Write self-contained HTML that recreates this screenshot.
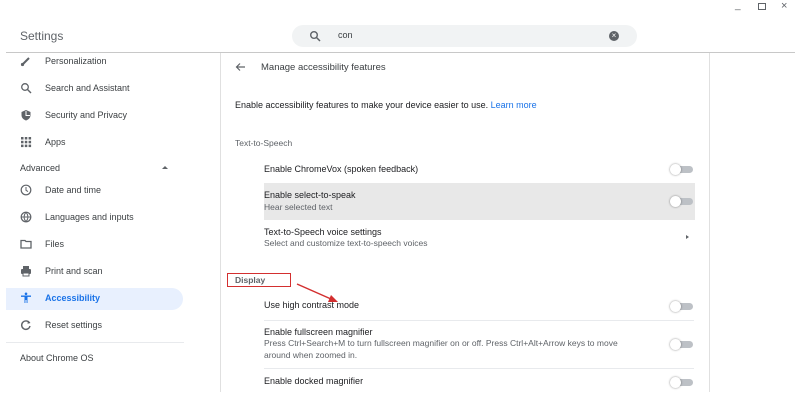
<!DOCTYPE html>
<html><head><style>
body{margin:0;width:800px;height:400px;background:#fff;font-family:"Liberation Sans",sans-serif;position:relative;overflow:hidden;color:#202124}
.a{position:absolute;white-space:nowrap}
.s{font-size:9px;color:#3c4043}
.ic{position:absolute;left:20px;width:12px;height:12px}
.t{font-size:9px;color:#202124}
.g{font-size:8.5px;color:#5f6368}
.tog{position:absolute;left:671px;width:22px;height:7px;border-radius:4px;background:#bdc1c6}
.tog:after{content:"";position:absolute;left:-1px;top:-2px;width:11px;height:11px;border-radius:50%;background:#fff;box-shadow:0 0 2px rgba(0,0,0,.45)}
.sep{position:absolute;left:264px;width:430px;height:1px;background:#e8eaed}
</style></head><body>
<div class="a" style="left:20px;top:29px;font-size:12px;color:#5f6368">Settings</div>
<div class="a" style="left:292px;top:25px;width:345px;height:22px;border-radius:11px;background:#f1f3f4"></div>
<svg class="a" style="left:309px;top:30px" width="12" height="12" viewBox="0 0 12 12"><circle cx="5" cy="5" r="3.3" fill="none" stroke="#5f6368" stroke-width="1.4"/><path d="M7.5 7.5L11 11" stroke="#5f6368" stroke-width="1.5"/></svg>
<div class="a" style="left:338px;top:30px;font-size:9px;color:#3c4043">con</div>
<div class="a" style="left:609px;top:31px;width:10px;height:10px;border-radius:50%;background:#5f6368;color:#fff;font-size:8px;line-height:10px;text-align:center">×</div>
<div class="a" style="left:735px;top:0;font-size:10px;color:#5f6368">_</div>
<div class="a" style="left:758px;top:3px;width:6px;height:5px;border:1.3px solid #5f6368"></div>
<div class="a" style="left:781px;top:0;font-size:11px;color:#5f6368">×</div>
<div class="a" style="left:6px;top:52px;width:789px;height:1px;background:#c8c8c8"></div>
<div class="a" style="left:220px;top:53px;width:1px;height:347px;background:#e0e0e0"></div>
<div class="a" style="left:709px;top:53px;width:1px;height:347px;background:#e0e0e0"></div>

<!-- sidebar -->
<svg class="ic" style="top:55px" viewBox="0 0 12 12"><path d="M2 10L9 3" stroke="#5f6368" stroke-width="2"/><circle cx="2.5" cy="9.5" r="1.6" fill="#5f6368"/></svg>
<div class="a s" style="left:45px;top:56px">Personalization</div>
<svg class="ic" style="top:82px" viewBox="0 0 12 12"><circle cx="5" cy="5" r="3.3" fill="none" stroke="#5f6368" stroke-width="1.3"/><path d="M7.5 7.5L11 11" stroke="#5f6368" stroke-width="1.4"/></svg>
<div class="a s" style="left:45px;top:83px">Search and Assistant</div>
<svg class="ic" style="top:109px" viewBox="0 0 12 12"><path d="M6 1L10.5 3v3c0 3-2 4.5-4.5 5.5C3.5 10.5 1.5 9 1.5 6V3z" fill="#5f6368"/><path d="M6 2v4.5h4" stroke="#fff" stroke-width="1" fill="none"/></svg>
<div class="a s" style="left:45px;top:110px">Security and Privacy</div>
<svg class="ic" style="top:136px" viewBox="0 0 12 12" fill="#5f6368"><rect x="1" y="1" width="2.5" height="2.5"/><rect x="4.8" y="1" width="2.5" height="2.5"/><rect x="8.6" y="1" width="2.5" height="2.5"/><rect x="1" y="4.8" width="2.5" height="2.5"/><rect x="4.8" y="4.8" width="2.5" height="2.5"/><rect x="8.6" y="4.8" width="2.5" height="2.5"/><rect x="1" y="8.6" width="2.5" height="2.5"/><rect x="4.8" y="8.6" width="2.5" height="2.5"/><rect x="8.6" y="8.6" width="2.5" height="2.5"/></svg>
<div class="a s" style="left:45px;top:137px">Apps</div>
<div class="a s" style="left:20px;top:163px">Advanced</div>
<div class="a" style="left:162px;top:166px;width:0;height:0;border-left:3px solid transparent;border-right:3px solid transparent;border-bottom:3px solid #5f6368"></div>
<svg class="ic" style="top:184px" viewBox="0 0 12 12"><circle cx="6" cy="6" r="4.8" fill="none" stroke="#5f6368" stroke-width="1.2"/><path d="M6 3v3.3l2 1.3" stroke="#5f6368" stroke-width="1" fill="none"/></svg>
<div class="a s" style="left:45px;top:185px">Date and time</div>
<svg class="ic" style="top:211px" viewBox="0 0 12 12"><circle cx="6" cy="6" r="4.8" fill="none" stroke="#5f6368" stroke-width="1.2"/><path d="M1.2 6h9.6M6 1.2c-2.5 3-2.5 6.6 0 9.6M6 1.2c2.5 3 2.5 6.6 0 9.6" stroke="#5f6368" stroke-width="1" fill="none"/></svg>
<div class="a s" style="left:45px;top:212px">Languages and inputs</div>
<svg class="ic" style="top:238px" viewBox="0 0 12 12"><path d="M1 2.5h4l1 1h5v6.5H1z" fill="none" stroke="#5f6368" stroke-width="1.3"/></svg>
<div class="a s" style="left:45px;top:239px">Files</div>
<svg class="ic" style="top:265px" viewBox="0 0 12 12" fill="#5f6368"><rect x="3" y="1" width="6" height="3"/><rect x="1" y="4" width="10" height="5" rx="1"/><rect x="3" y="8" width="6" height="3" fill="#fff" stroke="#5f6368"/></svg>
<div class="a s" style="left:45px;top:266px">Print and scan</div>
<div class="a" style="left:6px;top:288px;width:177px;height:22px;border-radius:0 11px 11px 0;background:#e8f0fe"></div>
<svg class="ic" style="top:292px" viewBox="0 0 12 12" fill="#1a73e8"><circle cx="6" cy="1.8" r="1.3"/><path d="M1 3.5h10v1.4H7.5V11H6.6V8H5.4v3H4.5V4.9H1z"/></svg>
<div class="a s" style="left:45px;top:293px;color:#1a73e8;font-weight:bold">Accessibility</div>
<svg class="ic" style="top:319px" viewBox="0 0 12 12"><path d="M9.5 4A4.2 4.2 0 1 0 10 7" fill="none" stroke="#5f6368" stroke-width="1.4"/><path d="M8 1.5l2.5 2.5-3 .8z" fill="#5f6368"/></svg>
<div class="a s" style="left:45px;top:320px">Reset settings</div>
<div class="a" style="left:6px;top:342px;width:178px;height:1px;background:#e8eaed"></div>
<div class="a s" style="left:20px;top:353px">About Chrome OS</div>

<!-- content -->
<svg class="a" style="left:235px;top:62px" width="11" height="10" viewBox="0 0 11 10"><path d="M10 5H2M5 1.5L1.5 5 5 8.5" stroke="#5f6368" stroke-width="1.2" fill="none"/></svg>
<div class="a" style="left:261px;top:62px;font-size:9.5px;color:#3c4043">Manage accessibility features</div>
<div class="a t" style="left:235px;top:100px">Enable accessibility features to make your device easier to use. <span style="color:#1a73e8">Learn more</span></div>
<div class="a g" style="left:235px;top:138px;color:#5f6368">Text-to-Speech</div>
<div class="a t" style="left:264px;top:164px">Enable ChromeVox (spoken feedback)</div>
<div class="tog" style="top:166px"></div>
<div class="a" style="left:264px;top:183px;width:431px;height:37px;background:#e8e8e8"></div>
<div class="a t" style="left:264px;top:190px">Enable select-to-speak</div>
<div class="a g" style="left:264px;top:202px">Hear selected text</div>
<div class="tog" style="top:198px"></div>
<div class="a t" style="left:264px;top:227px">Text-to-Speech voice settings</div>
<div class="a g" style="left:264px;top:238px">Select and customize text-to-speech voices</div>
<div class="a" style="left:686px;top:235px;width:0;height:0;border-top:2.5px solid transparent;border-bottom:2.5px solid transparent;border-left:3px solid #5f6368"></div>
<div class="a" style="left:227px;top:273px;width:62px;height:12px;border:1.5px solid #d32f2f"></div>
<div class="a g" style="left:235px;top:275px;font-weight:bold;color:#5f6368">Display</div>
<svg class="a" style="left:295px;top:282px" width="45" height="22" viewBox="0 0 45 22"><path d="M2 2L36 17" stroke="#d32f2f" stroke-width="1.5"/><path d="M43 20L33 20L36 13z" fill="#d32f2f"/></svg>
<div class="a t" style="left:264px;top:300px">Use high contrast mode</div>
<div class="tog" style="top:303px"></div>
<div class="sep" style="top:320px"></div>
<div class="a t" style="left:264px;top:327px">Enable fullscreen magnifier</div>
<div class="a g" style="left:264px;top:338px">Press Ctrl+Search+M to turn fullscreen magnifier on or off. Press Ctrl+Alt+Arrow keys to move</div>
<div class="a g" style="left:264px;top:350px">around when zoomed in.</div>
<div class="tog" style="top:341px"></div>
<div class="sep" style="top:368px"></div>
<div class="a t" style="left:264px;top:376px">Enable docked magnifier</div>
<div class="tog" style="top:379px"></div>
<div class="a" style="left:0;top:392px;width:800px;height:8px;background:#fff"></div>
</body></html>
